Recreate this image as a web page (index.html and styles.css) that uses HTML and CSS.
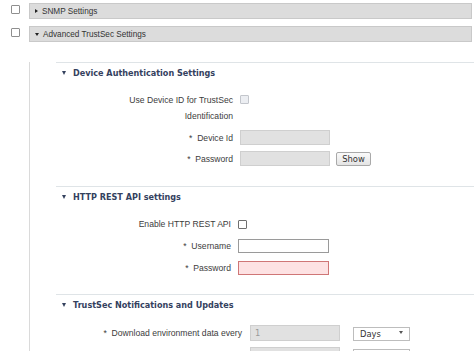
FILE: index.html
```html
<!DOCTYPE html>
<html lang="en">
<head>
    <meta charset="UTF-8">
    <title>Network Device - Advanced TrustSec Settings</title>
    <link rel="stylesheet" href="styles.css">
</head>
<body>
    <div class="group first">
        <span class="check"></span>
        <div class="group-body">
            <div class="bar"><span class="tri-right"></span>SNMP Settings</div>
        </div>
    </div>

    <div class="group">
        <span class="check"></span>
        <div class="group-body">
            <div class="bar"><span class="tri-down small"></span>Advanced TrustSec Settings</div>

            <div class="panel">
                <section class="section auth">
                    <h2 class="section-title"><span class="tri-down"></span>Device Authentication Settings</h2>
                    <div class="form">
                        <div class="field tall">
                            <label class="lbl">Use Device ID for TrustSec<br>Identification</label>
                            <span class="box disabled"></span>
                        </div>
                        <div class="field gap-top">
                            <label class="lbl">*&nbsp; Device Id</label>
                            <span class="input grey"></span>
                        </div>
                        <div class="field">
                            <label class="lbl">*&nbsp; Password</label>
                            <span class="input grey"></span>
                            <button class="btn">Show</button>
                        </div>
                    </div>
                </section>

                <section class="section rest">
                    <h2 class="section-title"><span class="tri-down"></span>HTTP REST API settings</h2>
                    <div class="form">
                        <div class="field">
                            <label class="lbl">Enable HTTP REST API</label>
                            <span class="box"></span>
                        </div>
                        <div class="field">
                            <label class="lbl">*&nbsp; Username</label>
                            <span class="input"></span>
                        </div>
                        <div class="field">
                            <label class="lbl">*&nbsp; Password</label>
                            <span class="input error"></span>
                        </div>
                    </div>
                </section>

                <section class="section notify">
                    <h2 class="section-title"><span class="tri-down"></span>TrustSec Notifications and Updates</h2>
                    <div class="form">
                        <div class="field">
                            <label class="lbl">*&nbsp; Download environment data every</label>
                            <span class="input grey tall-input">1</span>
                            <span class="select">Days<span class="caret"></span></span>
                        </div>
                        <div class="field">
                            <label class="lbl">*&nbsp; Download peer authorization policy every</label>
                            <span class="input grey tall-input">1</span>
                            <span class="select">Days<span class="caret"></span></span>
                        </div>
                    </div>
                </section>
            </div>
        </div>
    </div>
</body>
</html>
```

FILE: styles.css
```css
:root {
    --text-color: #3c3c3c;
    --title-color: #34415e;
    --bar-bg: #dcdcdc;
    --bar-border: #c9c9c9;
    --line-color: #dfe4e7;
}

body {
    margin: 0;
    width: 474px;
    height: 351px;
    overflow: hidden;
    background: #ffffff;
    color: var(--text-color);
    font-family: 'Liberation Sans', Arial, sans-serif;
    font-size: 8.6px;
}

.group {
    display: flex;
    margin-top: 7px;
}

.group.first {
    margin-top: 3px;
}

.check {
    flex: none;
    width: 9px;
    height: 9px;
    margin: 2px 9px 0 11px;
    border: 1px solid #8f8f8f;
    border-radius: 1px;
    box-sizing: border-box;
    background: #fff;
}

.group-body {
    flex: 1;
    min-width: 0;
}

.bar {
    height: 16px;
    margin-right: 2px;
    box-sizing: border-box;
    background: var(--bar-bg);
    border: 1px solid var(--bar-border);
    display: flex;
    align-items: center;
    padding-left: 5px;
    font-size: 8.2px;
    color: #333;
}

.tri-right {
    width: 0;
    height: 0;
    border-top: 2.5px solid transparent;
    border-bottom: 2.5px solid transparent;
    border-left: 3px solid #222;
    margin-right: 4px;
}

.tri-down {
    width: 0;
    height: 0;
    border-left: 2.5px solid transparent;
    border-right: 2.5px solid transparent;
    border-top: 4px solid var(--title-color);
    margin-right: 7px;
}

.tri-down.small {
    border-top-color: #222;
    border-top-width: 3px;
    margin-right: 4px;
}

.panel {
    height: 320px;
    border-left: 1px solid #dadada;
    padding-left: 26px;
}

.section {
    border-top: 1px solid var(--line-color);
}

.section-title {
    margin: 0;
    height: 19px;
    display: flex;
    align-items: center;
    padding-left: 6px;
    font-family: 'DejaVu Sans', Tahoma, sans-serif;
    font-size: 8.1px;
    font-weight: bold;
    color: var(--title-color);
}

.auth {
    margin-top: 20px;
    padding-bottom: 17px;
    --label-w: 177px;
}

.auth .form {
    margin-top: 10px;
}

.rest {
    padding-bottom: 15px;
    --label-w: 175px;
}

.rest .form {
    margin-top: 7px;
}

.notify {
    --label-w: 186px;
}

.notify .form {
    margin-top: 8px;
}

.field {
    display: flex;
    align-items: center;
    height: 22px;
}

.auth .field {
    height: 21px;
}

.auth .field.tall {
    height: 32px;
    align-items: flex-start;
    line-height: 16px;
}

.field.gap-top {
    margin-top: 3px;
}

.lbl {
    flex: none;
    width: var(--label-w);
    text-align: right;
    white-space: nowrap;
    margin-right: 7px;
}

.notify .lbl {
    margin-right: 8px;
}

.box {
    width: 9px;
    height: 9px;
    box-sizing: border-box;
    border: 1px solid #6f6f6f;
    border-radius: 1px;
    background: #fff;
}

.box.disabled {
    margin-top: 3px;
    border-color: #c3c6cc;
    background: #eceef2;
}

.input {
    width: 91px;
    height: 14px;
    box-sizing: border-box;
    border: 1px solid #9a9a9a;
    background: #fff;
}

.input.grey {
    border-color: #cfcfcf;
    background: #e1e1e1;
}

.input.error {
    border-color: #cf7676;
    background: #fde2e3;
}

.input.tall-input {
    width: 90px;
    height: 16px;
    padding-left: 4px;
    line-height: 14px;
    font-family: 'DejaVu Sans', Tahoma, sans-serif;
    font-size: 8.4px;
    color: #9a9a9a;
}

.auth .input {
    width: 90px;
    height: 15px;
}

.btn {
    margin: 1px 0 0 6px;
    height: 14px;
    width: 35px;
    padding: 0;
    border: 1px solid #a9a9a9;
    border-radius: 2px;
    background: linear-gradient(#fafafa, #e4e4e4);
    font-family: 'DejaVu Sans', Tahoma, sans-serif;
    font-size: 8.4px;
    color: #333;
}

.select {
    position: relative;
    margin: 2px 0 0 13px;
    width: 57px;
    height: 14px;
    box-sizing: border-box;
    border: 1px solid #bdbdbd;
    background: #fff;
    padding-left: 6px;
    line-height: 13px;
    font-family: 'DejaVu Sans', Tahoma, sans-serif;
    font-size: 8.4px;
    color: #333;
}

.caret {
    position: absolute;
    right: 6px;
    top: 3px;
    width: 0;
    height: 0;
    border-left: 2px solid transparent;
    border-right: 2px solid transparent;
    border-top: 3px solid #555;
}
```
